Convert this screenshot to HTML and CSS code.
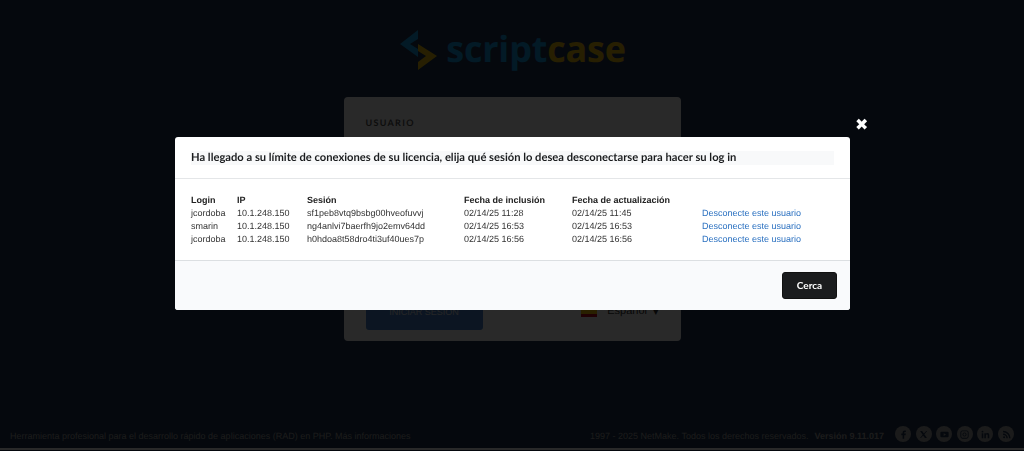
FILE: index.html
```html
<!DOCTYPE html>
<html lang="es">
<head>
<meta charset="utf-8">
<title>Scriptcase</title>
<link rel="stylesheet" href="styles.css">
</head>
<body>
<div class="page">
  <header class="logo">
    <svg class="logo-mark" width="40" height="42" viewBox="0 0 40 42" aria-hidden="true">
      <polygon class="mark-blue" points="19,2 1,16 19,29 19,21 11,16 19,11"/>
      <polygon class="mark-gold" points="19,16 38,28 19,42 19,34 27,28 19,23"/>
    </svg>
    <span class="logo-text"><span class="logo-script">script</span><span class="logo-case">case</span></span>
  </header>
  <main class="login">
    <label class="field-label">USUARIO</label>
    <div class="field"></div>
    <label class="field-label">CONTRASEÑA</label>
    <div class="field"></div>
    <div class="login-actions">
      <button class="login-btn">INICIAR SESIÓN</button>
      <div class="lang"><span class="flag"></span><span>Español</span><span class="caret">▾</span></div>
    </div>
  </main>
  <footer class="foot">
    <span class="foot-left">Herramienta profesional para el desarrollo rápido de aplicaciones (RAD) en PHP. Más informaciones</span>
    <span class="foot-right">1997 - 2025 NetMake. Todos los derechos reservados.</span>
    <strong class="foot-version">Versión 9.11.017</strong>
    <div class="social">
      <span class="soc"><svg viewBox="0 0 16 16"><path d="M9 14V9h2l.4-2.300H9V5.400c0-.7.3-1.100 1.100-1.100h1.300V2.200C11 2.100 10.400 2 9.700 2 7.900 2 6.700 3.100 6.700 5v1.700H4.800V9h1.900v5z"/></svg></span>
      <span class="soc"><svg viewBox="0 0 16 16"><path d="M3 3h3l7 10h-3z M12 3h1.300L9 8l-.7-1z M3 13h1.300L7.500 9.400l-.7-1z"/></svg></span>
      <span class="soc"><svg viewBox="0 0 16 16"><path fill-rule="evenodd" d="M3.500 4h9A1.500 1.500 0 0 1 14 5.500v5a1.500 1.500 0 0 1-1.500 1.500h-9A1.500 1.500 0 0 1 2 10.500v-5A1.500 1.500 0 0 1 3.500 4zM6.800 6v4l3.400-2z"/></svg></span>
      <span class="soc"><svg viewBox="0 0 16 16"><path fill-rule="evenodd" d="M5 2h6a3 3 0 0 1 3 3v6a3 3 0 0 1-3 3H5a3 3 0 0 1-3-3V5a3 3 0 0 1 3-3zm0 1.300A1.700 1.700 0 0 0 3.300 5v6A1.700 1.700 0 0 0 5 12.700h6a1.700 1.700 0 0 0 1.700-1.700V5A1.700 1.700 0 0 0 11 3.300zM8 5a3 3 0 1 1 0 6 3 3 0 0 1 0-6zm0 1.300a1.700 1.700 0 1 0 0 3.400 1.700 1.700 0 0 0 0-3.400z"/></svg></span>
      <span class="soc"><svg viewBox="0 0 16 16"><path d="M2.500 6h2.300v7.500H2.500z M3.600 2.500a1.300 1.300 0 1 1 0 2.700 1.300 1.300 0 0 1 0-2.700z M6.300 6h2.200v1c.4-.7 1.200-1.200 2.300-1.200 2 0 2.700 1.200 2.700 3.300v4.400h-2.300V9.600c0-1-.3-1.700-1.200-1.700-1 0-1.400.7-1.400 1.700v3.900H6.300z"/></svg></span>
      <span class="soc"><svg viewBox="0 0 16 16"><path d="M3 2.500v2.200a8.800 8.800 0 0 1 8.800 8.800H14A11 11 0 0 0 3 2.500z M3 6.500v2.200a4.800 4.800 0 0 1 4.800 4.800H10a7 7 0 0 0-7-7z M4.500 10.500a1.500 1.500 0 1 1 0 3 1.500 1.500 0 0 1 0-3z"/></svg></span>
    </div>
  </footer>
</div>

<div class="overlay">
  <span class="close">✖</span>
  <section class="modal">
    <div class="modal-head">
      <h2 class="modal-title">Ha llegado a su límite de conexiones de su licencia, elija qué sesión lo desea desconectarse para hacer su log in</h2>
    </div>
    <div class="modal-body">
      <table class="sessions">
        <thead>
          <tr><th class="c1">Login</th><th class="c2">IP</th><th class="c3">Sesión</th><th class="c4">Fecha de inclusión</th><th class="c5">Fecha de actualización</th><th></th></tr>
        </thead>
        <tbody>
          <tr><td>jcordoba</td><td>10.1.248.150</td><td>sf1peb8vtq9bsbg00hveofuvvj</td><td>02/14/25 11:28</td><td>02/14/25 11:45</td><td><a href="#">Desconecte este usuario</a></td></tr>
          <tr><td>smarin</td><td>10.1.248.150</td><td>ng4anlvi7baerfh9jo2emv64dd</td><td>02/14/25 16:53</td><td>02/14/25 16:53</td><td><a href="#">Desconecte este usuario</a></td></tr>
          <tr><td>jcordoba</td><td>10.1.248.150</td><td>h0hdoa8t58dro4ti3uf40ues7p</td><td>02/14/25 16:56</td><td>02/14/25 16:56</td><td><a href="#">Desconecte este usuario</a></td></tr>
        </tbody>
      </table>
    </div>
    <div class="modal-foot">
      <button class="close-btn">Cerca</button>
    </div>
  </section>
</div>
</body>
</html>
```

FILE: styles.css
```css
* { box-sizing: border-box; }
html, body { margin: 0; height: 100%; }
body { background: #203450; font-family: "Liberation Sans", Arial, sans-serif; overflow: hidden; text-rendering: geometricPrecision; }

.page { height: 450px; display: flex; flex-direction: column; align-items: center; border-bottom: 2px solid #fff; }

.logo { display: flex; align-items: center; gap: 7px; height: 42px; margin-top: 28px; margin-left: 1px; }
.logo-mark { display: block; }
.mark-blue { fill: #14a0e8; }
.mark-gold { fill: #f0c010; }
.logo-text { font-family: "Open Sans", sans-serif; font-weight: 700; font-size: 36px; line-height: 42px; letter-spacing: -0.2px; }
.logo-script { color: #14a0e8; }
.logo-case { color: #f0c010; }

.login { width: 337px; height: 244px; margin-top: 27px; padding: 20px 22px 0; background: #fff; border-radius: 4px; display: flex; flex-direction: column; }
.field-label { font-family: "Lato", sans-serif; font-size: 9px; font-weight: 700; letter-spacing: 1.3px; color: #555; line-height: 12px; }
.field { height: 38px; margin: 8px 0 18px; border: 1px solid #bbb; border-radius: 3px; }
.login-actions { display: flex; align-items: center; justify-content: space-between; margin-top: auto; margin-bottom: 11px; }
.login-btn { width: 117px; height: 38px; padding: 2px 0 0; background: #4a86d0; border: 0; border-radius: 3px; color: #e4e8ee; font-family: "Liberation Sans", Arial, sans-serif; font-size: 9px; }
.lang { display: flex; align-items: center; font-size: 11px; color: #333; }
.flag { width: 16px; height: 11px; margin-right: 10px; background: linear-gradient(#c60b1e 25%, #ffc400 25%, #ffc400 75%, #c60b1e 75%); }
.caret { margin-left: 6px; }

.foot { align-self: stretch; margin-top: auto; height: 24px; padding: 0 10px; display: flex; align-items: center; font-size: 9px; color: #a8a8a8; }
.foot-left { flex: 1; }
.foot-version { margin-left: 6px; }
.social { display: flex; gap: 4.6px; margin-left: 11px; margin-bottom: 4px; }
.soc { width: 16px; height: 16px; border-radius: 50%; background: #a8a8a8; display: flex; align-items: center; justify-content: center; }
.soc svg { width: 11px; height: 11px; fill: #203450; }

.overlay { position: fixed; inset: 0; background: rgba(0, 0, 0, 0.84); }
.close { position: absolute; left: 855px; top: 115px; font-family: "DejaVu Sans", sans-serif; font-size: 16px; line-height: 20px; color: #fff; }
.modal { position: absolute; left: 175px; top: 137px; width: 675px; height: 173px; background: #fff; border-radius: 3px; display: flex; flex-direction: column; }
.modal-head { height: 42px; padding: 14px 16px 0; border-bottom: 1px solid #e4e6e8; }
.modal-title { margin: 0; background: #f8f9fa; font-family: "Lato", sans-serif; font-size: 11.2px; font-weight: 700; line-height: 14px; color: #1a1c1e; }
.modal-body { flex: 1; padding: 15px 16px 0; }
.sessions { border-collapse: collapse; table-layout: fixed; width: 640px; font-size: 9px; line-height: 13px; color: #333; }
.sessions th { padding: 0; text-align: left; font-weight: 700; color: #222; }
.sessions td { padding: 0; }
.c1 { width: 46px; }
.c2 { width: 70px; }
.c3 { width: 157px; }
.c4 { width: 108px; }
.c5 { width: 130px; }
.sessions a { color: #2a70c0; text-decoration: none; }
.modal-foot { height: 50px; padding: 11px 13px 0 0; background: #f9fafc; border-top: 1px solid #dcdfe2; border-radius: 0 0 3px 3px; display: flex; justify-content: flex-end; align-items: flex-start; }
.close-btn { width: 55px; height: 27px; padding: 0 0 1px; background: #1b1c1e; border: 1px solid #111; border-radius: 3px; color: #fff; font-family: "Lato", sans-serif; font-size: 10px; font-weight: 700; }
```
